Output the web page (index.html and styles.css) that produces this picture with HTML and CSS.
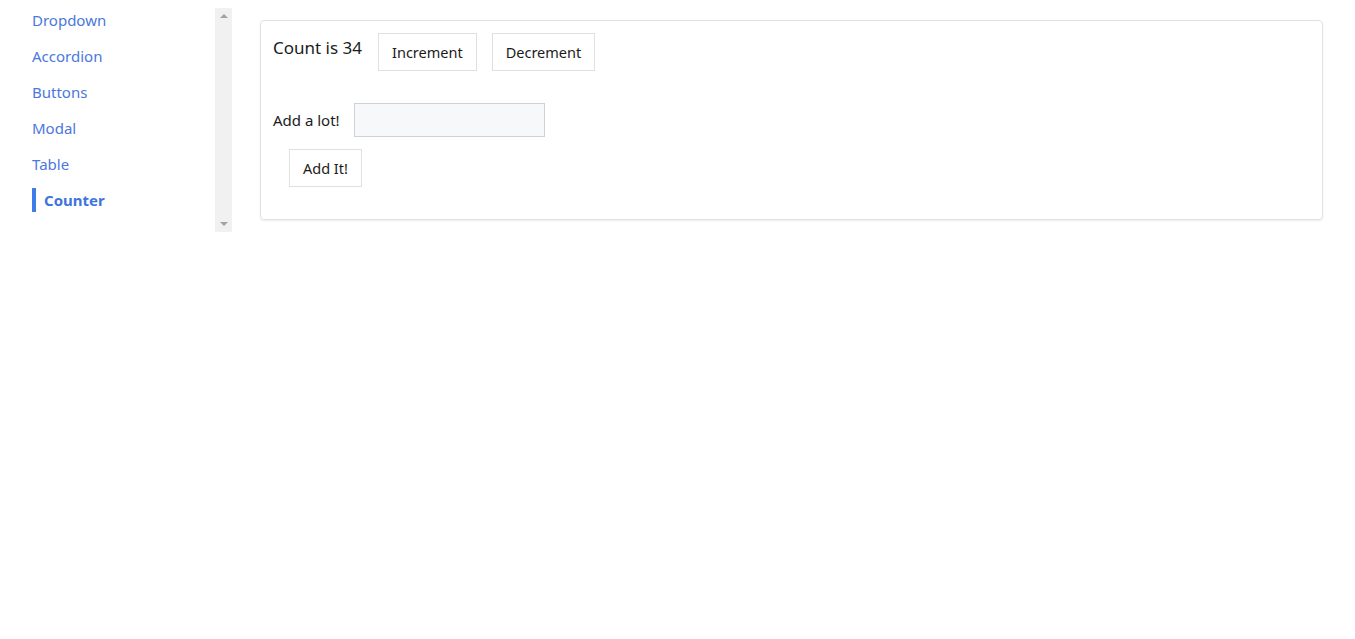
FILE: index.html
```html
<!DOCTYPE html>
<html lang="en">
  <head>
    <meta charset="UTF-8">
    <meta name="viewport" content="width=device-width,initial-scale=1.0">
    <link rel="stylesheet" href="styles.css">
    <title>Counter</title>
  </head>
  <body>
    <div class="page">
      <div class="sidebar">
        <nav class="nav">
          <a href="#" class="navLink">Dropdown</a>
          <a href="#" class="navLink">Accordion</a>
          <a href="#" class="navLink">Buttons</a>
          <a href="#" class="navLink">Modal</a>
          <a href="#" class="navLink">Table</a>
          <a href="#" class="navLink active">Counter</a>
        </nav>
        <div class="scrollbar">
          <span class="arrowUp"></span>
          <span class="arrowDown"></span>
        </div>
      </div>

      <div class="card">
        <div class="countRow">
          <span class="countText">Count is 34</span>
          <button class="btn">Increment</button>
          <button class="btn">Decrement</button>
        </div>
        <div class="addRow">
          <label class="addLabel">Add a lot!</label>
          <input class="addInput" type="text">
        </div>
        <div class="submitRow">
          <button class="btn">Add It!</button>
        </div>
      </div>
    </div>
  </body>
</html>
```

FILE: styles.css
```css
body {
  margin: 8px;
  font-family: "Noto Sans", "Open Sans", sans-serif;
  color: #1b1b1b;
  background: #fff;
}

.page {
  display: flex;
  align-items: flex-start;
}

.sidebar {
  display: flex;
  width: 224px;
  height: 224px;
}

.nav {
  flex: 1;
  display: flex;
  flex-direction: column;
  gap: 12px;
  padding-left: 24px;
}

.navLink {
  font-size: 15px;
  line-height: 24px;
  color: #4a78dc;
  text-decoration: none;
}

.navLink.active {
  font-weight: 700;
  color: #3d74e0;
  border-left: 4px solid #3f7ceb;
  padding-left: 8px;
}

.scrollbar {
  width: 17px;
  background: #f1f1f1;
  display: flex;
  flex-direction: column;
  justify-content: space-between;
  align-items: center;
  padding: 6px 0;
  box-sizing: border-box;
}

.arrowUp,
.arrowDown {
  width: 0;
  height: 0;
  border-left: 4px solid transparent;
  border-right: 4px solid transparent;
}

.arrowUp {
  border-bottom: 4px solid #a3a3a3;
}

.arrowDown {
  border-top: 4px solid #a3a3a3;
}

.card {
  flex: 1;
  margin: 12px 24px 0 28px;
  border: 1px solid #e2e2e2;
  border-radius: 4px;
  box-shadow: 0 1px 2px rgba(0, 0, 0, 0.08);
  padding: 12px 12px 32px 12px;
}

.countRow {
  display: flex;
  align-items: flex-start;
  gap: 16px;
}

.countText {
  font-size: 17px;
  line-height: 30px;
}

.btn {
  font-family: "Noto Sans", "Open Sans", sans-serif;
  font-size: 14.5px;
  line-height: 22px;
  padding: 7px 13px;
  background: #fff;
  color: #1b1b1b;
  border: 1px solid #e0e0e0;
}

.btn + .btn {
  margin-left: -1px;
}

.addRow {
  display: flex;
  align-items: center;
  gap: 14px;
  margin-top: 32px;
}

.addLabel {
  font-size: 15px;
}

.addInput {
  width: 191px;
  height: 34px;
  box-sizing: border-box;
  border: 1px solid #cfd3d8;
  background: #f7f8fa;
  padding: 0 8px;
}

.submitRow {
  margin-top: 12px;
  padding-left: 16px;
}
```
